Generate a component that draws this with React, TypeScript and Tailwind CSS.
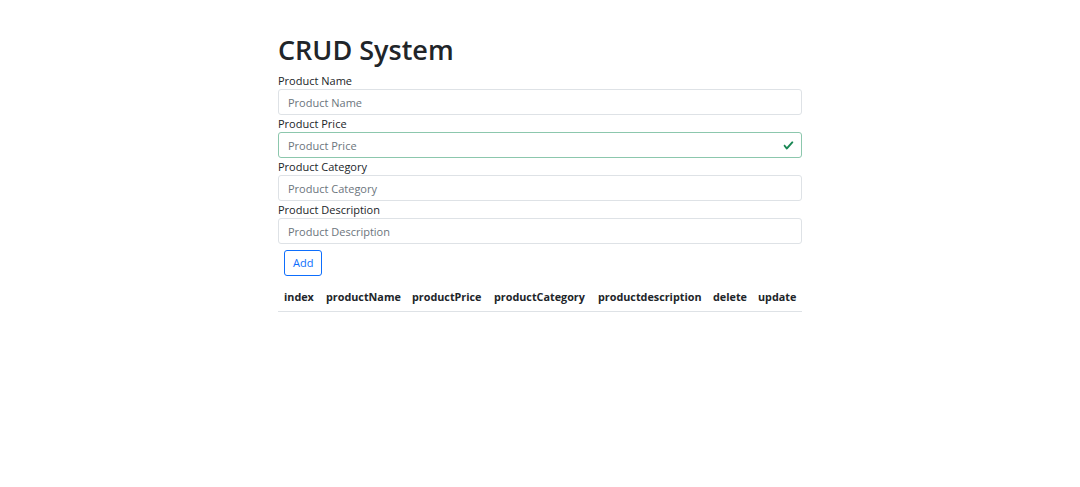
import { useState } from 'react'

const fields = [
  { label: 'Product Name', key: 'name' },
  { label: 'Product Price', key: 'price' },
  { label: 'Product Category', key: 'category' },
  { label: 'Product Description', key: 'description' },
]

const columns = [
  { title: 'index', w: 'w-[42px]' },
  { title: 'productName', w: 'w-[86px]' },
  { title: 'productPrice', w: 'w-[82px]' },
  { title: 'productCategory', w: 'w-[104px]' },
  { title: 'productdescription', w: 'w-[115px]' },
  { title: 'delete', w: 'w-[45px]' },
  { title: 'update', w: 'w-[50px]' },
]

function CheckIcon() {
  return (
    <svg viewBox="0 0 8 8" className="h-[11px] w-[11px]">
      <path fill="#198754" d="M2.3 6.73.6 4.53c-.4-1.04.46-1.4 1.1-.8l1.1 1.4 3.4-3.8c.6-.63 1.6-.27 1.2.7l-4 4.6c-.43.5-.8.4-1.1.1z" />
    </svg>
  )
}

export default function App() {
  const [values, setValues] = useState<Record<string, string>>({})

  return (
    <div className="min-h-screen bg-white font-['Open_Sans',sans-serif] text-[#212529]">
      <div className="mx-auto w-[524px] pt-[34px]">
        <h1 className="mb-[6px] text-[27px] font-semibold leading-[1.2]">CRUD System</h1>
        {fields.map(f => (
          <div key={f.key}>
            <label className="block text-[11px] leading-[17px]">{f.label}</label>
            <div className="relative">
              <input
                value={values[f.key] ?? ''}
                onChange={e => setValues({ ...values, [f.key]: e.target.value })}
                placeholder={f.label}
                className={`block h-[26px] w-full rounded-[3px] border bg-white px-[9px] text-[11px] outline-none placeholder:text-[#6c757d] ${
                  f.key === 'price' ? 'border-[#8cc7ad] pr-[28px]' : 'border-[#dee2e6]'
                }`}
              />
              {f.key === 'price' && (
                <span className="absolute right-[8px] top-[8px]">
                  <CheckIcon />
                </span>
              )}
            </div>
          </div>
        ))}
        <button className="m-[6px] h-[26px] rounded-[3px] border border-[#0d6efd] px-[8px] text-[11px] text-[#0d6efd] hover:bg-[#0d6efd] hover:text-white">
          Add
        </button>
        <table className="w-full table-fixed border-collapse text-[10.8px]">
          <thead>
            <tr className="border-b border-[#dee2e6]">
              {columns.map(c => (
                <th key={c.title} className={`${c.w} whitespace-nowrap px-[6px] py-[6px] text-left font-bold leading-[17px]`}>
                  {c.title}
                </th>
              ))}
            </tr>
          </thead>
          <tbody />
        </table>
      </div>
    </div>
  )
}
